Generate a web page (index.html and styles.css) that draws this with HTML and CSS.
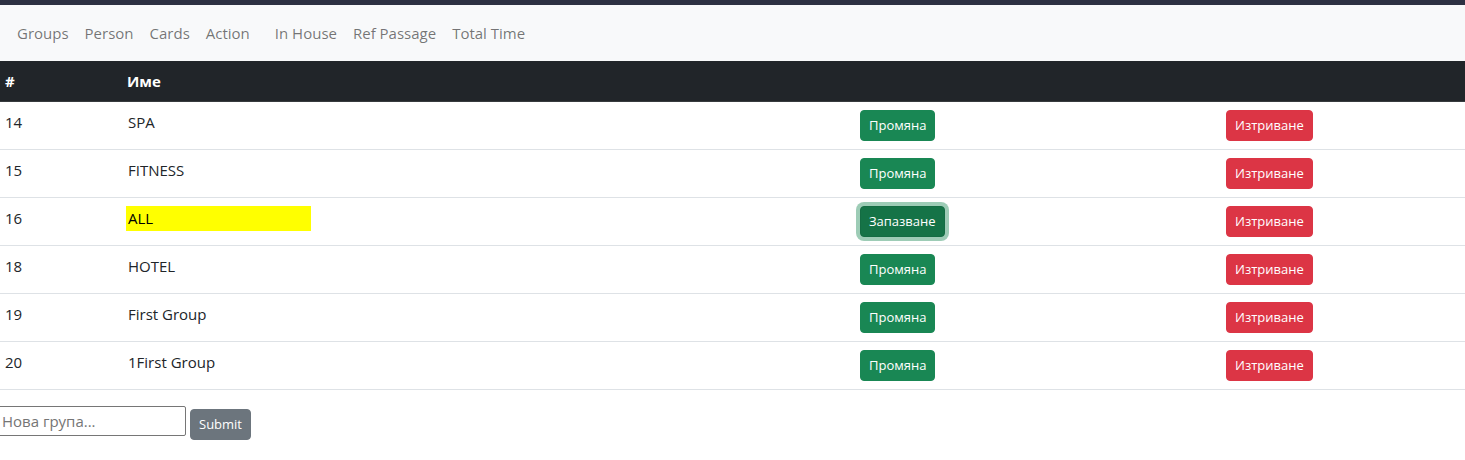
FILE: index.html
```html
<!DOCTYPE html>
<html lang="bg">
<head>
<meta charset="utf-8">
<title>Groups</title>
<link rel="stylesheet" href="styles.css">
</head>
<body>
<div class="topbar"></div>
<nav class="navbar">
  <a class="nav-link" href="#">Groups</a>
  <a class="nav-link" href="#">Person</a>
  <a class="nav-link" href="#">Cards</a>
  <a class="nav-link" href="#">Action</a>
  <a class="nav-link nav-gap" href="#">In House</a>
  <a class="nav-link" href="#">Ref Passage</a>
  <a class="nav-link" href="#">Total Time</a>
</nav>
<table class="table">
  <colgroup>
    <col class="c1"><col class="c2"><col class="c3"><col class="c4">
  </colgroup>
  <thead>
    <tr><th>#</th><th>Име</th><th></th><th></th></tr>
  </thead>
  <tbody>
    <tr><td>14</td><td>SPA</td><td><button class="btn btn-success">Промяна</button></td><td><button class="btn btn-danger">Изтриване</button></td></tr>
    <tr><td>15</td><td>FITNESS</td><td><button class="btn btn-success">Промяна</button></td><td><button class="btn btn-danger">Изтриване</button></td></tr>
    <tr><td>16</td><td><input class="edit-input" type="text" value="ALL"></td><td><button class="btn btn-success btn-focus">Запазване</button></td><td><button class="btn btn-danger">Изтриване</button></td></tr>
    <tr><td>18</td><td>HOTEL</td><td><button class="btn btn-success">Промяна</button></td><td><button class="btn btn-danger">Изтриване</button></td></tr>
    <tr><td>19</td><td>First Group</td><td><button class="btn btn-success">Промяна</button></td><td><button class="btn btn-danger">Изтриване</button></td></tr>
    <tr><td>20</td><td>1First Group</td><td><button class="btn btn-success">Промяна</button></td><td><button class="btn btn-danger">Изтриване</button></td></tr>
  </tbody>
</table>
<form class="add-form">
  <input class="new-input" type="text" placeholder="Нова група...">
  <button class="btn btn-secondary" type="button">Submit</button>
</form>
</body>
</html>
```
FILE: styles.css
```css
* { box-sizing: border-box; }
html, body {
  margin: 0;
  padding: 0;
  background: #fff;
  font-family: "Open Sans", "Noto Sans", sans-serif;
  font-size: 16px;
  line-height: 24px;
  color: #212529;
}
.topbar {
  height: 5px;
  background: #2d3142;
}
.navbar {
  display: flex;
  align-items: center;
  height: 56px;
  background: #f8f9fa;
  padding: 0 9px;
}
.nav-link {
  color: rgba(0, 0, 0, 0.55);
  text-decoration: none;
  padding: 8px 8px;
  font-size: 15px;
}
.nav-gap { margin-left: 9px; }
.table {
  width: 100%;
  border-collapse: collapse;
  table-layout: fixed;
}
.c1 { width: 121px; }
.c2 { width: 733px; }
.c3 { width: 366px; }
.c4 { width: auto; }
.table th, .table td {
  padding: 8px 6px 8px 5px;
  text-align: left;
  vertical-align: top;
  border-bottom: 1px solid #dee2e6;
}
.table th:nth-child(2) { padding-left: 6px; }
.table td:nth-child(2) { padding-left: 7px; }
.table td:nth-child(3) { padding-left: 6px; }
.table td:nth-child(4) { padding-left: 6px; }
.table thead th {
  background: #212529;
  color: #fff;
  font-weight: 700;
  font-size: 15px;
  border-bottom-color: #373b3e;
}
.table td { height: 48px; font-size: 15px; }
.btn {
  display: inline-block;
  font-family: inherit;
  font-size: 13px;
  line-height: 21px;
  padding: 4px 8px;
  border: 1px solid transparent;
  border-radius: 4px;
  color: #fff;
  cursor: pointer;
}
.btn-success { background: #198754; border-color: #198754; }
.btn-danger { background: #dc3545; border-color: #dc3545; }
.btn-secondary { background: #6c757d; border-color: #6c757d; }
.btn-focus {
  background: #157347;
  border-color: #146c43;
  box-shadow: 0 0 0 4px rgba(60, 153, 110, 0.5);
}
.edit-input {
  width: 185px;
  height: 25px;
  border: none;
  background: #ffff00;
  font-family: inherit;
  font-size: 15px;
  padding: 1px 2px;
  margin-top: -2px;
  margin-left: -2px;
  color: #000;
  outline: none;
}
.add-form {
  display: flex;
  align-items: flex-start;
  gap: 4px;
  padding-top: 16px;
}
.new-input {
  width: 188px;
  height: 30px;
  margin-left: -2px;
  border: 1px solid #767676;
  border-radius: 2px;
  font-family: inherit;
  font-size: 15px;
  padding: 1px 3px;
  color: #212529;
}
.new-input::placeholder { color: #757575; }
.add-form .btn { margin-top: 3px; }
```
